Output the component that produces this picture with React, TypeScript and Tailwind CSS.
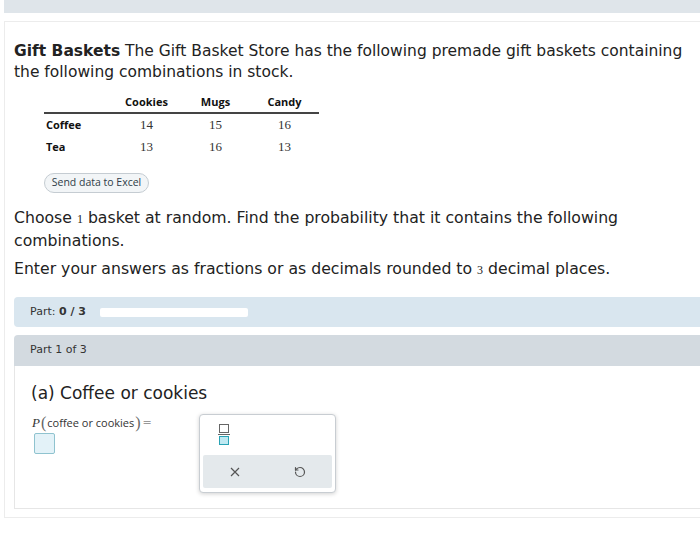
import React from "react";

const verdana = { fontFamily: '"DejaVu Sans", Verdana, sans-serif' };

function Fraction() {
  return (
    <div className="flex flex-col items-center w-[12px]">
      <div className="w-[10px] h-[9px] border border-[#666] bg-white" />
      <div className="w-[12px] h-[1px] bg-[#666] my-[1px]" />
      <div className="w-[10px] h-[9px] border border-[#2aa3b5] bg-[#bfe9f2]" />
    </div>
  );
}

export default function App() {
  return (
    <div className="w-[700px] h-[535px] bg-white overflow-hidden text-[#222]" style={verdana}>
      <div className="ml-[4px] h-[13px] bg-[#dfe5ea]" />
      <div className="ml-[4px] mt-[8px] border-l border-t border-b border-[#ececec] pl-[9px] pt-[19px] pb-[8px]">
        <p className="text-[15.5px] leading-[21px] text-[#222] pr-[2px]">
          <span className="font-bold">Gift Baskets</span> The Gift Basket Store has the following premade gift baskets containing the following combinations in stock.
        </p>

        <div className="ml-[30px] mt-[9px] w-[275px]" style={{ fontFamily: '"Open Sans", "Liberation Sans", sans-serif' }}>
          <div className="grid grid-cols-[68px_69px_69px_69px] h-[22px] items-center border-b-2 border-[#444] text-[11px] font-bold text-[#111]">
            <div />
            <div className="text-center">Cookies</div>
            <div className="text-center">Mugs</div>
            <div className="text-center">Candy</div>
          </div>
          {[
            ["Coffee", "14", "15", "16"],
            ["Tea", "13", "16", "13"],
          ].map((r) => (
            <div key={r[0]} className="grid grid-cols-[68px_69px_69px_69px] h-[22px] items-center">
              <div className="pl-[2px] text-[11px] font-bold text-[#111]">{r[0]}</div>
              {r.slice(1).map((v, i) => (
                <div key={i} className="text-center text-[13px] text-[#333]" style={{ fontFamily: '"Liberation Serif", serif' }}>
                  {v}
                </div>
              ))}
            </div>
          ))}
        </div>

        <div className="ml-[30px] mt-[15px] w-[105px] h-[20px] rounded-full border border-[#c5ccd2] bg-[#f2f5f7] flex items-center justify-center text-[10.5px] text-[#2f3d48]" style={{ fontFamily: '"Open Sans", "Liberation Sans", sans-serif' }}>
          Send data to Excel
        </div>

        <p className="mt-[14px] text-[15.7px] leading-[21px] text-[#222]">
          Choose <span className="text-[12px]" style={{ fontFamily: '"Liberation Serif", serif' }}>1</span> basket at random. Find the probability that it contains the following combinations.
        </p>
        <p className="mt-[7px] text-[15.7px] leading-[21px] text-[#222]">
          Enter your answers as fractions or as decimals rounded to <span className="text-[12px]" style={{ fontFamily: '"Liberation Serif", serif' }}>3</span> decimal places.
        </p>

        <div className="mt-[16px] h-[30px] bg-[#d9e6ef] rounded-l-[4px] flex items-center pl-[16px] text-[11px] text-[#333]">
          <span>Part: <span className="font-bold">0 / 3</span></span>
          <div className="ml-[14px] w-[148px] h-[9px] bg-white rounded-[2px]" />
        </div>

        <div className="mt-[8px] h-[31px] bg-[#d3dae0] rounded-tl-[4px] flex items-center pl-[16px] text-[11px] text-[#333]">
          Part 1 of 3
        </div>
        <div className="relative h-[143px] border-l border-b border-[#e6e6e6] pl-[16px]">
          <div className="pt-[16px] text-[17px] leading-[22px] text-[#222]">(a) Coffee or cookies</div>
          <div className="mt-[12px] ml-[1px] flex items-center h-[14px] text-[11px] text-[#333]">
            <span className="italic text-[13px]" style={{ fontFamily: '"Liberation Serif", serif' }}>P</span>
            <span className="text-[16px] text-[#666] font-light ml-[1px] mr-[1px]" style={{ fontFamily: '"Liberation Serif", serif' }}>(</span>
            <span style={{ fontFamily: '"Open Sans", "Liberation Sans", sans-serif' }}>coffee or cookies</span>
            <span className="text-[16px] text-[#666] font-light ml-[1px]" style={{ fontFamily: '"Liberation Serif", serif' }}>)</span>
            <span className="ml-[2px] text-[#999]">=</span>
          </div>
          <div className="mt-[3px] ml-[3px] w-[21px] h-[21px] rounded-[2px] border border-[#8fc3cf] bg-[#e3f2f8]" />

          <div className="absolute left-[184px] top-[48px] w-[137px] h-[79px] rounded-[4px] border border-[#c8cdd2] bg-white shadow-[0_1px_4px_rgba(0,0,0,0.18)] flex flex-col">
            <div className="h-[40px] pl-[18px] pt-[9px]">
              <Fraction />
            </div>
            <div className="mx-[3px] h-[33px] bg-[#e4e9ec] rounded-[2px] grid grid-cols-2 items-center text-[#555]">
              <div className="flex justify-center">
                <svg width="10" height="10" viewBox="0 0 10 10" fill="none" stroke="#555" strokeWidth="1.2">
                  <path d="M1 1 L9 9 M9 1 L1 9" />
                </svg>
              </div>
              <div className="flex justify-center">
                <svg width="12" height="12" viewBox="0 0 24 24" fill="none" stroke="#555" strokeWidth="2.4" strokeLinecap="round" strokeLinejoin="round">
                  <path d="M3 12a9 9 0 1 0 9-9 9.75 9.75 0 0 0-6.74 2.74L3 8" />
                  <path d="M3 3v5h5" />
                </svg>
              </div>
            </div>
          </div>
        </div>
      </div>
    </div>
  );
}
